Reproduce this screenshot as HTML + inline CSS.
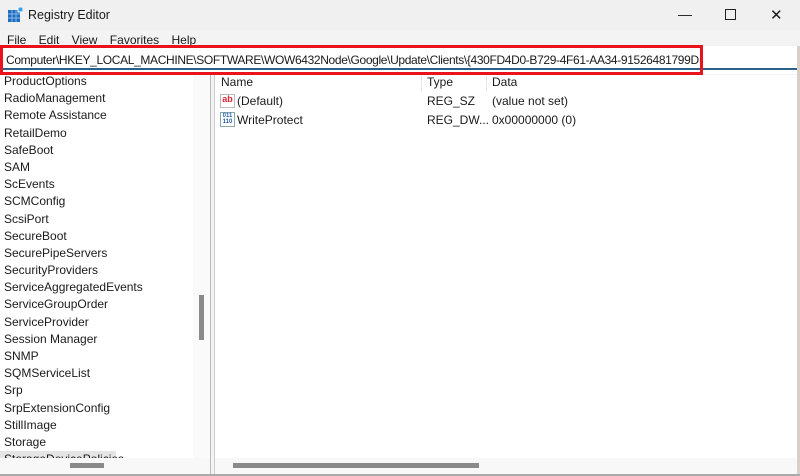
<!DOCTYPE html>
<html><head><style>
body{margin:0;width:800px;height:476px;overflow:hidden;background:#f3f3f3;font-family:"Liberation Sans",sans-serif;font-size:12px;color:#1a1a1a;position:relative}
.a{position:absolute;white-space:nowrap}
.tree div{height:17.2px;line-height:17px;padding-left:4px}
</style></head><body>
<div class="a" style="left:0;top:0;width:800px;height:30px;background:#f0f0f0"></div>
<svg class="a" style="left:8px;top:7px" width="15" height="15" viewBox="0 0 15 15"><rect x="0" y="3" width="12" height="12" fill="#1e6fc4"/><g stroke="#9cc7ef" stroke-width="0.8"><line x1="4" y1="3" x2="4" y2="15"/><line x1="8" y1="3" x2="8" y2="15"/><line x1="0" y1="7" x2="12" y2="7"/><line x1="0" y1="11" x2="12" y2="11"/></g><rect x="10" y="0" width="5" height="5" fill="#3aa0e8" stroke="#fff" stroke-width="1"/></svg>
<div class="a" style="left:28px;top:8px;font-size:12.5px">Registry Editor</div>
<div class="a" style="left:678px;top:6px;font-size:14px">&#8212;</div>
<div class="a" style="left:725px;top:9px;width:9px;height:9px;border:1px solid #222"></div>
<div class="a" style="left:770px;top:6px;font-size:15px">&#10005;</div>
<div class="a" style="left:7px;top:33px;word-spacing:9px">File Edit View Favorites Help</div>
<div class="a" style="left:0;top:46px;width:800px;height:28px;background:#fff"></div>
<div class="a" style="left:0;top:68px;width:797px;height:2px;background:#2b5f8a"></div>
<div class="a" style="left:6px;top:53px;font-size:12px;letter-spacing:-0.35px">Computer\HKEY_LOCAL_MACHINE\SOFTWARE\WOW6432Node\Google\Update\Clients\{430FD4D0-B729-4F61-AA34-91526481799D</div>
<div class="a" style="left:0;top:45px;width:697px;height:24px;border:3px solid #e8131c"></div>
<div class="a" style="left:0;top:75px;width:193px;height:383px;background:#fff;overflow:hidden">
<div class="tree" style="margin-top:-2px">
<div>ProductOptions</div><div>RadioManagement</div><div>Remote Assistance</div><div>RetailDemo</div><div>SafeBoot</div><div>SAM</div><div>ScEvents</div><div>SCMConfig</div><div>ScsiPort</div><div>SecureBoot</div><div>SecurePipeServers</div><div>SecurityProviders</div><div>ServiceAggregatedEvents</div><div>ServiceGroupOrder</div><div>ServiceProvider</div><div>Session Manager</div><div>SNMP</div><div>SQMServiceList</div><div>Srp</div><div>SrpExtensionConfig</div><div>StillImage</div><div>Storage</div><div style="background:#e5e5e5;width:112px">StorageDevicePolicies</div></div></div>
<div class="a" style="left:193px;top:75px;width:17px;height:383px;background:#fafafa"></div>
<div class="a" style="left:199px;top:295px;width:5px;height:45px;background:#8a8a8a"></div>
<div class="a" style="left:210px;top:75px;width:1px;height:401px;background:#bbb"></div>
<div class="a" style="left:214px;top:75px;width:1px;height:401px;background:#ccc"></div>
<div class="a" style="left:215px;top:75px;width:582px;height:383px;background:#fff"></div>
<div class="a" style="left:797px;top:46px;width:3px;height:430px;background:#d8d0c4"></div>
<div class="a" style="left:221px;top:75px">Name</div>
<div class="a" style="left:421px;top:75px;width:1px;height:16px;background:#e5e5e5"></div>
<div class="a" style="left:486px;top:75px;width:1px;height:16px;background:#e5e5e5"></div>
<div class="a" style="left:427px;top:75px">Type</div>
<div class="a" style="left:492px;top:75px">Data</div>
<div class="a" style="left:220px;top:94px;width:13px;height:12px;border:1px solid #bbb;background:#fff;color:#d23;font-size:9px;font-weight:bold;line-height:9px;text-align:center">ab</div>
<div class="a" style="left:237px;top:94px">(Default)</div>
<div class="a" style="left:427px;top:94px">REG_SZ</div>
<div class="a" style="left:492px;top:94px">(value not set)</div>
<div class="a" style="left:220px;top:112px;width:13px;height:13px;border:1px solid #8aa;background:#fff;color:#2a5ea8;font-size:6px;font-weight:bold;line-height:6px;text-align:center">011<br>110</div>
<div class="a" style="left:237px;top:113px">WriteProtect</div>
<div class="a" style="left:427px;top:113px">REG_DW...</div>
<div class="a" style="left:492px;top:113px">0x00000000 (0)</div>
<div class="a" style="left:0;top:458px;width:210px;height:16px;background:#f8f8f8"></div>
<div class="a" style="left:70px;top:463px;width:34px;height:5px;background:#8a8a8a"></div>
<div class="a" style="left:215px;top:458px;width:582px;height:16px;background:#f8f8f8"></div>
<div class="a" style="left:233px;top:463px;width:246px;height:5px;background:#8a8a8a"></div>
<div class="a" style="left:0;top:474px;width:800px;height:2px;background:#aaa"></div>
</body></html>
